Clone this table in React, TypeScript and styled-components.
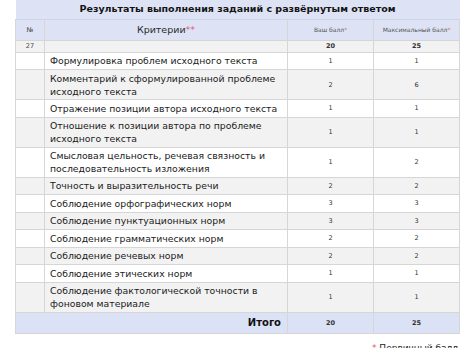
import styled, { createGlobalStyle } from 'styled-components';

const rows = [
  { text: 'Формулировка проблем исходного текста', score: 1, max: 1 },
  { text: 'Комментарий к сформулированной проблеме исходного текста', score: 2, max: 6, tall: true },
  { text: 'Отражение позиции автора исходного текста', score: 1, max: 1 },
  { text: 'Отношение к позиции автора по проблеме исходного текста', score: 1, max: 1, tall: true },
  { text: 'Смысловая цельность, речевая связность и последовательность изложения', score: 1, max: 2, tall: true },
  { text: 'Точность и выразительность речи', score: 2, max: 2 },
  { text: 'Соблюдение орфографических норм', score: 3, max: 3 },
  { text: 'Соблюдение пунктуационных норм', score: 3, max: 3 },
  { text: 'Соблюдение грамматических норм', score: 2, max: 2 },
  { text: 'Соблюдение речевых норм', score: 2, max: 2 },
  { text: 'Соблюдение этических норм', score: 1, max: 1 },
  { text: 'Соблюдение фактологической точности в фоновом материале', score: 1, max: 1, tall: true },
];

const App = () => (
  <Page>
    <GlobalStyle />
    <Table>
      <colgroup>
        <col style={{ width: 29 }} />
        <col style={{ width: 243 }} />
        <col style={{ width: 86 }} />
        <col style={{ width: 86 }} />
      </colgroup>
      <tbody>
        <TitleRow>
          <TitleCell colSpan={4}>Результаты выполнения заданий с развёрнутым ответом</TitleCell>
        </TitleRow>
        <HeadRow>
          <NumCell>№</NumCell>
          <CriteriaHead>
            Критерии<Star>**</Star>
          </CriteriaHead>
          <SmallHead>
            Ваш балл<Star>*</Star>
          </SmallHead>
          <SmallHead>
            Максимальный балл<Star>*</Star>
          </SmallHead>
        </HeadRow>
        <TaskRow>
          <NumCell>27</NumCell>
          <Cell />
          <ScoreCell $bold>20</ScoreCell>
          <ScoreCell $bold>25</ScoreCell>
        </TaskRow>
        {rows.map((row, i) => (
          <Row key={i} $shade={i % 2 === 1} $tall={row.tall}>
            <Cell />
            <CriteriaCell>{row.text}</CriteriaCell>
            <ScoreCell>{row.score}</ScoreCell>
            <ScoreCell>{row.max}</ScoreCell>
          </Row>
        ))}
        <TotalRow>
          <TotalLabel colSpan={2}>Итого</TotalLabel>
          <ScoreCell $bold>20</ScoreCell>
          <ScoreCell $bold>25</ScoreCell>
        </TotalRow>
      </tbody>
    </Table>
    <Footnote>
      <Star>*</Star> Первичный балл
    </Footnote>
  </Page>
);

export default App;

const GlobalStyle = createGlobalStyle`
  html, body {
    margin: 0;
    padding: 0;
    background: #ffffff;
    overflow: hidden;
  }
`;

const Page = styled.div`
  width: 474px;
  height: 348px;
  overflow: hidden;
  padding: 0 15px;
  box-sizing: border-box;
  font-family: 'DejaVu Sans', Verdana, sans-serif;
  color: #1c1c1c;
`;

const Table = styled.table`
  width: 444px;
  table-layout: fixed;
  border-collapse: collapse;
`;

const Cell = styled.td`
  border: 1px solid #d6d6d6;
  padding: 0;
`;

const TitleRow = styled.tr`
  height: 19px;
  background: #dde3f4;
`;

const TitleCell = styled.td`
  text-align: center;
  font-weight: bold;
  font-size: 9.5px;
  line-height: 12px;
  color: #141414;
  padding: 0;
  border-bottom: 1px solid #cfd5e8;
`;

const HeadRow = styled.tr`
  height: 21px;
  background: #dde3f4;
`;

const NumCell = styled(Cell)`
  font-size: 6.5px;
  line-height: 8px;
  text-align: center;
  color: #444444;
`;

const CriteriaHead = styled(Cell)`
  text-align: center;
  font-size: 9.5px;
  line-height: 12px;
  color: #2a2a2a;
`;

const SmallHead = styled(Cell)`
  text-align: center;
  font-size: 6px;
  line-height: 8px;
  color: #555555;
`;

const Star = styled.span`
  color: #e8577a;
`;

const TaskRow = styled.tr`
  height: 12px;
  background: #f2f2f2;
`;

const Row = styled.tr<{ $shade?: boolean; $tall?: boolean }>`
  height: ${(p) => (p.$tall ? 30 : 17.5)}px;
  background: ${(p) => (p.$shade ? '#f2f2f2' : '#ffffff')};
`;

const CriteriaCell = styled(Cell)`
  font-size: 9.3px;
  line-height: 13px;
  padding: 0 4px 0 5px;
  color: #1a1a1a;
`;

const ScoreCell = styled(Cell)<{ $bold?: boolean }>`
  text-align: center;
  font-size: 6.5px;
  line-height: 8px;
  font-weight: ${(p) => (p.$bold ? 'bold' : 'normal')};
  color: #333333;
`;

const TotalRow = styled.tr`
  height: 21px;
  background: #dce2f6;
`;

const TotalLabel = styled(Cell)`
  text-align: right;
  font-weight: bold;
  font-size: 10px;
  line-height: 12px;
  padding-right: 6px;
  color: #111111;
`;

const Footnote = styled.div`
  margin-top: 9px;
  padding-left: 357px;
  font-size: 9px;
  line-height: 11px;
  color: #1c1c1c;
`;
